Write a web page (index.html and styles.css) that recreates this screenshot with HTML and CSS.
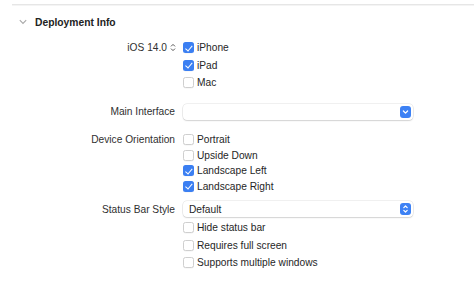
FILE: index.html
```html
<!DOCTYPE html>
<html>
<head>
<meta charset="utf-8">
<link rel="stylesheet" href="styles.css">
</head>
<body>
<div class="panel">
  <div class="sep"></div>
  <div class="header">
    <svg class="disclosure" width="8" height="6" viewBox="0 0 8 6"><path d="M0.8 1.2 L4 4.4 L7.2 1.2" fill="none" stroke="#a8a8a8" stroke-width="1.1"/></svg>
    <span class="title">Deployment Info</span>
  </div>
  <div class="form">
    <div class="group g1">
      <div class="label">iOS 14.0
        <svg class="stepper" width="6" height="9" viewBox="0 0 6 9"><path d="M1 3.4 L3 1.4 L5 3.4 M1 5.6 L3 7.6 L5 5.6" fill="none" stroke="#555" stroke-width="1"/></svg>
      </div>
      <div class="opts">
        <div class="opt l175"><span class="cb on"></span>iPhone</div>
        <div class="opt l175"><span class="cb on"></span>iPad</div>
        <div class="opt l175"><span class="cb"></span>Mac</div>
      </div>
    </div>
    <div class="group g2">
      <div class="label">Main Interface</div>
      <div class="popup"><span class="ptext"></span>
        <span class="pbtn"><svg width="11" height="12" viewBox="0 0 11 12"><path d="M3.4 5 L5.5 7.1 L7.6 5" fill="none" stroke="#fff" stroke-width="1.3" stroke-linecap="round" stroke-linejoin="round"/></svg></span>
      </div>
    </div>
    <div class="group g3">
      <div class="label">Device Orientation</div>
      <div class="opts">
        <div class="opt l157"><span class="cb"></span>Portrait</div>
        <div class="opt l157"><span class="cb"></span>Upside Down</div>
        <div class="opt l157"><span class="cb on"></span>Landscape Left</div>
        <div class="opt l157"><span class="cb on"></span>Landscape Right</div>
      </div>
    </div>
    <div class="group g4">
      <div class="label">Status Bar Style</div>
      <div class="popup"><span class="ptext">Default</span>
        <span class="pbtn"><svg width="11" height="12" viewBox="0 0 11 12"><path d="M3.8 4.7 L5.5 3 L7.2 4.7 M3.8 7.3 L5.5 9 L7.2 7.3" fill="none" stroke="#fff" stroke-width="1.2" stroke-linecap="round" stroke-linejoin="round"/></svg></span>
      </div>
    </div>
    <div class="group g5">
      <div class="label"></div>
      <div class="opts">
        <div class="opt l175"><span class="cb"></span>Hide status bar</div>
        <div class="opt l175"><span class="cb"></span>Requires full screen</div>
        <div class="opt l175"><span class="cb"></span>Supports multiple windows</div>
      </div>
    </div>
  </div>
</div>
</body>
</html>
```

FILE: styles.css
```css
html, body {
  margin: 0;
  padding: 0;
  background: #ffffff;
}
body {
  width: 474px;
  height: 285px;
  overflow: hidden;
  font-family: "Liberation Sans", Arial, sans-serif;
  font-size: 10.2px;
  color: #262626;
}
.panel {
  padding-top: 4px;
}
.sep {
  margin-left: 12px;
  height: 1px;
  background: #e6e6e6;
  box-shadow: 0 1px 0 #f4f4f4;
}
.header {
  display: flex;
  align-items: center;
  height: 32px;
  margin-top: 1px;
}
.disclosure {
  margin-left: 19px;
  margin-right: 8px;
}
.title {
  font-weight: bold;
  font-size: 10.3px;
  color: #222;
}
.form {
  display: flex;
  flex-direction: column;
  padding-top: 1px;
}
.group {
  display: grid;
  grid-template-columns: 175px 231px;
  column-gap: 8px;
}
.label {
  text-align: right;
  color: #303030;
  line-height: 17px;
  display: flex;
  justify-content: flex-end;
  align-items: center;
  height: 17px;
}
.stepper {
  margin-left: 3px;
  margin-right: -1px;
}
.opts {
  display: flex;
  flex-direction: column;
}
.opt {
  display: flex;
  align-items: center;
  color: #262626;
}
.l175 { height: 17.5px; }
.l157 { height: 15.7px; }
.g3 .label { height: 15.7px; }
.cb {
  box-sizing: border-box;
  width: 11px;
  height: 11px;
  border-radius: 2.5px;
  border: 1px solid #cfcfcf;
  background: #fff;
  box-shadow: 0 0.5px 0.5px rgba(0,0,0,0.06);
  margin-right: 3px;
  position: relative;
}
.cb.on {
  border: none;
  background: #3b7ff2;
}
.cb.on::after {
  content: "";
  position: absolute;
  left: 3.6px;
  top: 1.4px;
  width: 2.6px;
  height: 5.6px;
  border-right: 1.6px solid #fff;
  border-bottom: 1.6px solid #fff;
  transform: rotate(40deg);
}
.g2 { margin-top: 12px; }
.g3 { margin-top: 12px; }
.g4 { margin-top: 7px; }
.g5 { margin-top: 1.5px; }
.g2 .label, .g4 .label { height: 16px; }
.popup {
  box-sizing: border-box;
  height: 16px;
  width: 230px;
  background: #fff;
  border-radius: 4px;
  box-shadow: 0 0 0 0.5px rgba(0,0,0,0.12), 0 1px 1.5px rgba(0,0,0,0.12);
  display: flex;
  align-items: center;
  justify-content: space-between;
  padding: 0 2px 0 6px;
}
.ptext {
  color: #262626;
}
.pbtn {
  width: 11px;
  height: 12px;
  border-radius: 3px;
  background: #3d81f4;
  display: flex;
}
```
